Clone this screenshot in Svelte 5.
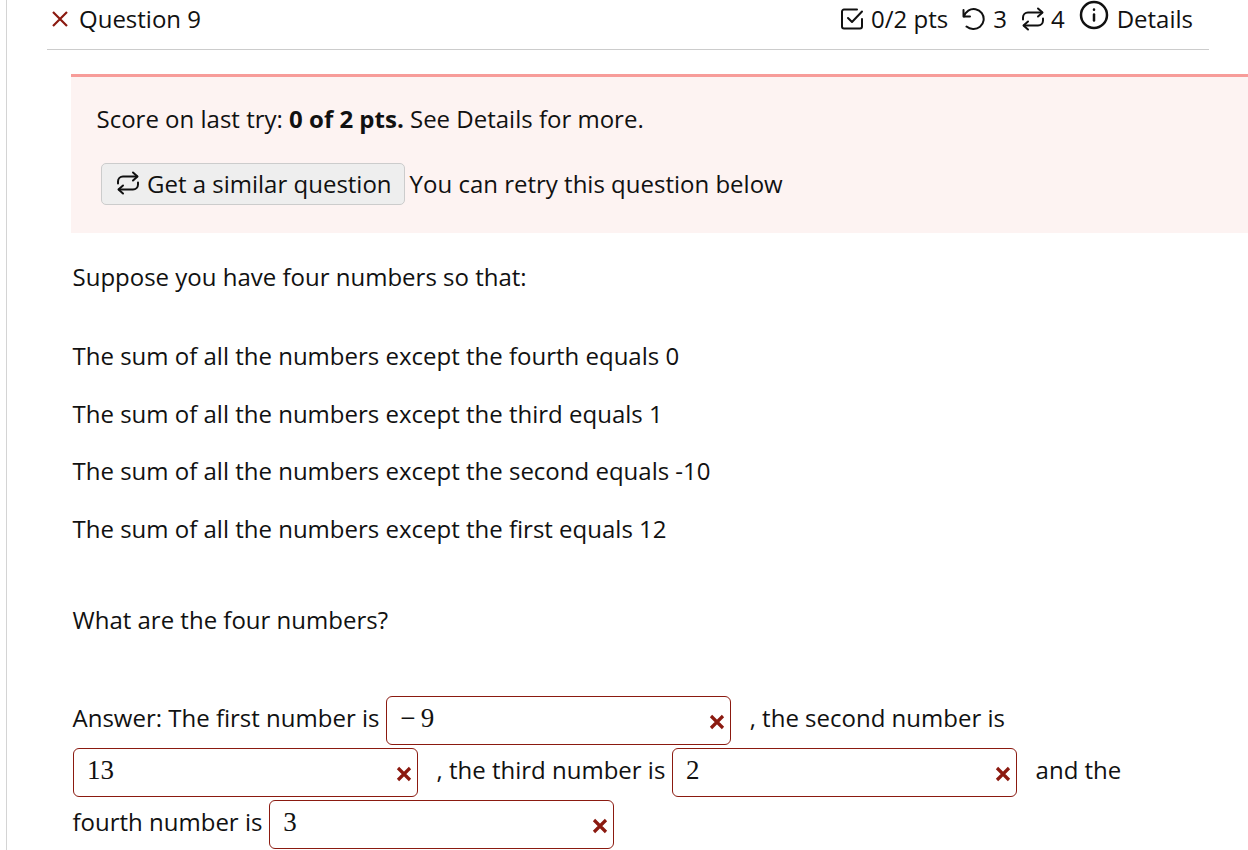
<script>
  const sums = [
    ['fourth', '0'],
    ['third', '1'],
    ['second', '-10'],
    ['first', '12']
  ]
</script>

{#snippet retryIcon()}
  <svg class="icon" width="24" height="24" viewBox="0 0 24 24" fill="none" stroke="currentColor" stroke-width="2" stroke-linecap="round" stroke-linejoin="round">
    <path d="M17 1.500l4.500 4-4.500 4" />
    <path d="M21 5.500H7a5 5 0 0 0-5 5v2" />
    <path d="M7 22.500l-4.500-4 4.500-4" />
    <path d="M3 18.500h14a5 5 0 0 0 5-5v-2" />
  </svg>
{/snippet}

{#snippet answer(value)}
  <span class="field">
    <span class="value">{value}</span>
    <svg class="bad" width="16" height="16" viewBox="0 0 16 16" stroke="currentColor" stroke-width="3.200" fill="none">
      <path d="M2 2l12 12M14 2L2 14" />
    </svg>
  </span>
{/snippet}

<div class="page">
  <header>
    <div class="title">
      <svg class="cross" width="18" height="18" viewBox="0 0 18 18" fill="none" stroke="currentColor" stroke-width="2.200">
        <path d="M2 2l14 14M16 2L2 16" />
      </svg>
      <span>Question 9</span>
    </div>
    <div class="meta">
      <span class="item points">
        <svg class="icon" width="24" height="24" viewBox="0 0 24 24" fill="none" stroke="currentColor" stroke-width="2" stroke-linecap="round" stroke-linejoin="round">
          <path d="M22 12v7.500a2 2 0 0 1-2 2H4a2 2 0 0 1-2-2V4.500a2 2 0 0 1 2-2h13" />
          <path d="M8 11l4 4L22 4.500" />
        </svg>
        0/2 pts
      </span>
      <span class="item spaced">
        <svg class="icon" width="24" height="24" viewBox="0 0 24 24" fill="none" stroke="currentColor" stroke-width="2" stroke-linecap="round" stroke-linejoin="round">
          <path d="M2.500 3v6.500H9" />
          <path d="M3 9.500A10 10 0 1 1 12 22a10 10 0 0 1-6.500-2.400" />
        </svg>
        3
      </span>
      <span class="item">
        {@render retryIcon()}
        4
      </span>
      <span class="item details">
        <svg class="icon" width="30" height="30" viewBox="0 0 30 30" fill="none" stroke="currentColor" stroke-width="2.500" stroke-linecap="round">
          <circle cx="15" cy="15" r="13" />
          <path d="M15 14.500v6" />
          <path d="M15 9.500v.2" />
        </svg>
        Details
      </span>
    </div>
  </header>

  <section class="banner">
    <p>Score on last try: <strong>0 of 2 pts.</strong> See Details for more.</p>
    <div class="retry">
      <button>{@render retryIcon()} Get a similar question</button>
      <span>You can retry this question below</span>
    </div>
  </section>

  <main>
    <p class="intro">Suppose you have four numbers so that:</p>
    <div class="sums">
      {#each sums as [which, total]}
        <p>The sum of all the numbers except the {which} equals {total}</p>
      {/each}
    </div>
    <p class="ask">What are the four numbers?</p>
    <p class="answer">
      Answer: The first number is {@render answer('−\u20099')}<span class="after">, the second number is</span>
      {@render answer('13')}<span class="after">, the third number is</span> {@render answer('2')}<span class="after">and the</span>
      fourth number is {@render answer('3')}
    </p>
  </main>
</div>

<style>
  :global(body) {
    background: #fff;
    color: #111;
    font-family: "Open Sans", "Noto Sans", sans-serif;
    font-size: 24px;
    overflow: hidden;
  }

  .page {
    width: 1242px;
    height: 850px;
    margin-left: 6px;
    border-left: 1px solid #d4d4d4;
    box-sizing: border-box;
    overflow: hidden;
  }

  header {
    display: flex;
    justify-content: space-between;
    align-items: center;
    width: 1162px;
    height: 50px;
    margin-left: 40px;
    border-bottom: 1px solid #ccc;
    padding: 0 16px 12px 4px;
    box-sizing: border-box;
  }

  .title {
    display: flex;
    align-items: center;
    gap: 10px;
  }

  .cross {
    color: #8b1a10;
  }

  .meta {
    display: flex;
    align-items: center;
    gap: 15px;
  }

  .item {
    display: flex;
    align-items: center;
    gap: 6px;
  }

  .points {
    gap: 7px;
  }

  .spaced {
    gap: 8px;
    margin: 0 -1px 0 -2px;
  }

  .details {
    gap: 8px;
    margin-left: -1px;
  }

  .details .icon {
    margin-top: -8px;
  }

  .banner {
    width: 1300px;
    height: 159px;
    margin: 24px 0 0 64px;
    padding: 25px 25.500px 0;
    box-sizing: border-box;
    background: #fdf3f2;
    border-top: 3px solid #f79c99;
  }

  .banner p {
    margin: 0;
    line-height: 33px;
  }

  .retry {
    display: flex;
    align-items: center;
    gap: 5px;
    margin: 28px 0 0 4.500px;
  }

  .retry span {
    margin-bottom: 2px;
  }

  button {
    display: flex;
    align-items: center;
    gap: 7px;
    height: 42px;
    padding: 0 12px 2px 14px;
    border: 1px solid #ccc;
    border-radius: 5px;
    background: #eeeeee;
    color: inherit;
    font: inherit;
  }

  main {
    margin-left: 65.500px;
    width: 1075px;
  }

  main p {
    margin: 0;
    line-height: 33px;
  }

  .intro {
    margin-top: 27px;
  }

  .sums {
    display: flex;
    flex-direction: column;
    gap: 24.500px;
    margin-top: 46px;
  }

  .ask {
    margin-top: 58px;
  }

  main .answer {
    margin-top: 57.500px;
    line-height: 49.500px;
  }

  .field {
    display: inline-flex;
    align-items: center;
    justify-content: space-between;
    width: 345px;
    height: 49px;
    box-sizing: border-box;
    margin-left: 0.500px;
    padding: 0 5px 0 13px;
    border: 1px solid #8b1a10;
    border-radius: 6px;
    vertical-align: middle;
    line-height: 1;
  }

  .value {
    font-family: "Liberation Serif", "DejaVu Serif", serif;
    font-size: 27px;
    margin-top: -4px;
  }

  .bad {
    color: #8b1a10;
    margin-top: 2px;
  }

  .after {
    margin-left: 18.500px;
  }

  .icon {
    display: block;
    flex: none;
  }
</style>
